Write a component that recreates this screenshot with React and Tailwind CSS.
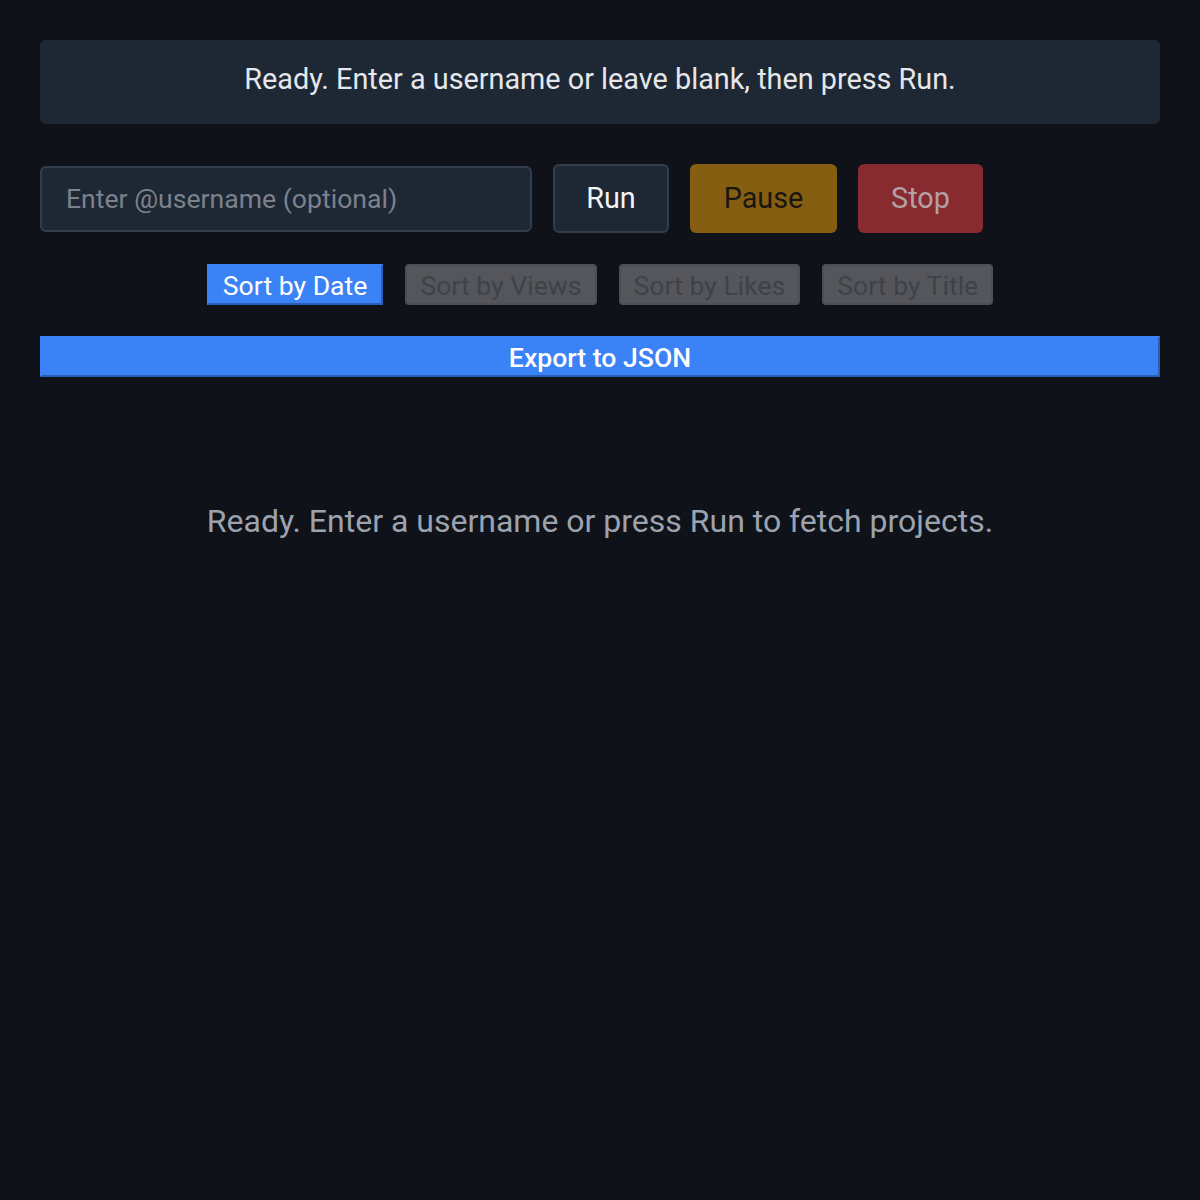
import { useState } from "react";

const SORTS = ["Date", "Views", "Likes", "Title"];

export default function App() {
  const [username, setUsername] = useState("");
  const [sortBy, setSortBy] = useState("Date");

  return (
    <div className="min-h-[1200px] bg-[#0f1219] p-10 font-['Roboto',sans-serif]">
      {/* status */}
      <div className="h-[84px] bg-[#1e2734] rounded-md flex items-center justify-center pb-1 text-[28.8px] text-gray-200">
        Ready. Enter a username or leave blank, then press Run.
      </div>

      {/* controls */}
      <div className="mt-10 flex items-center gap-[21px]">
        <input
          value={username}
          onChange={(e) => setUsername(e.target.value)}
          placeholder="Enter @username (optional)"
          className="w-[492px] h-[66px] bg-[#1e2734] border-2 border-[#343d4b] rounded-md px-6 text-[26.6px] text-gray-100 placeholder:text-[#7b828d] outline-none"
        />
        <button className="w-[116px] h-[69px] bg-[#1e2734] border-2 border-[#343d4b] rounded-md text-[28.8px] text-gray-100">
          Run
        </button>
        <button className="w-[147px] h-[69px] bg-[#865e11] rounded-md text-[28.8px] text-[#1a1710]">
          Pause
        </button>
        <button className="w-[125px] h-[69px] bg-[#872b31] rounded-md text-[28.8px] text-[#b3a1a5]">
          Stop
        </button>
      </div>

      {/* sort */}
      <div className="mt-[31px] flex justify-center gap-[22px]">
        {SORTS.map((s) =>
          sortBy === s ? (
            <button
              key={s}
              onClick={() => setSortBy(s)}
              className="h-[41px] px-[14px] pb-[2px] bg-[#3b82f6] border-2 border-t-[#3b82f6] border-l-[#3b82f6] border-b-[#2a5fb5] border-r-[#2a5fb5] text-[26.6px] text-white"
            >
              Sort by {s}
            </button>
          ) : (
            <button
              key={s}
              onClick={() => setSortBy(s)}
              className="h-[41px] px-[13px] pb-[2px] bg-[#54565b] border-2 border-[#4d4f54] rounded-[4px] text-[26.6px] text-[#3f4248]"
            >
              Sort by {s}
            </button>
          )
        )}
      </div>

      <button className="mt-[31px] w-full h-[41px] pb-[2px] bg-[#3b82f6] border-2 border-t-[#3b82f6] border-l-[#3b82f6] border-b-[#2a5fb5] border-r-[#2a5fb5] text-[26.6px] font-medium text-white">
        Export to JSON
      </button>

      <div className="mt-[120px] text-center text-[32px] leading-[48px] text-[#9ca3af]">
        Ready. Enter a username or press Run to fetch projects.
      </div>
    </div>
  );
}
